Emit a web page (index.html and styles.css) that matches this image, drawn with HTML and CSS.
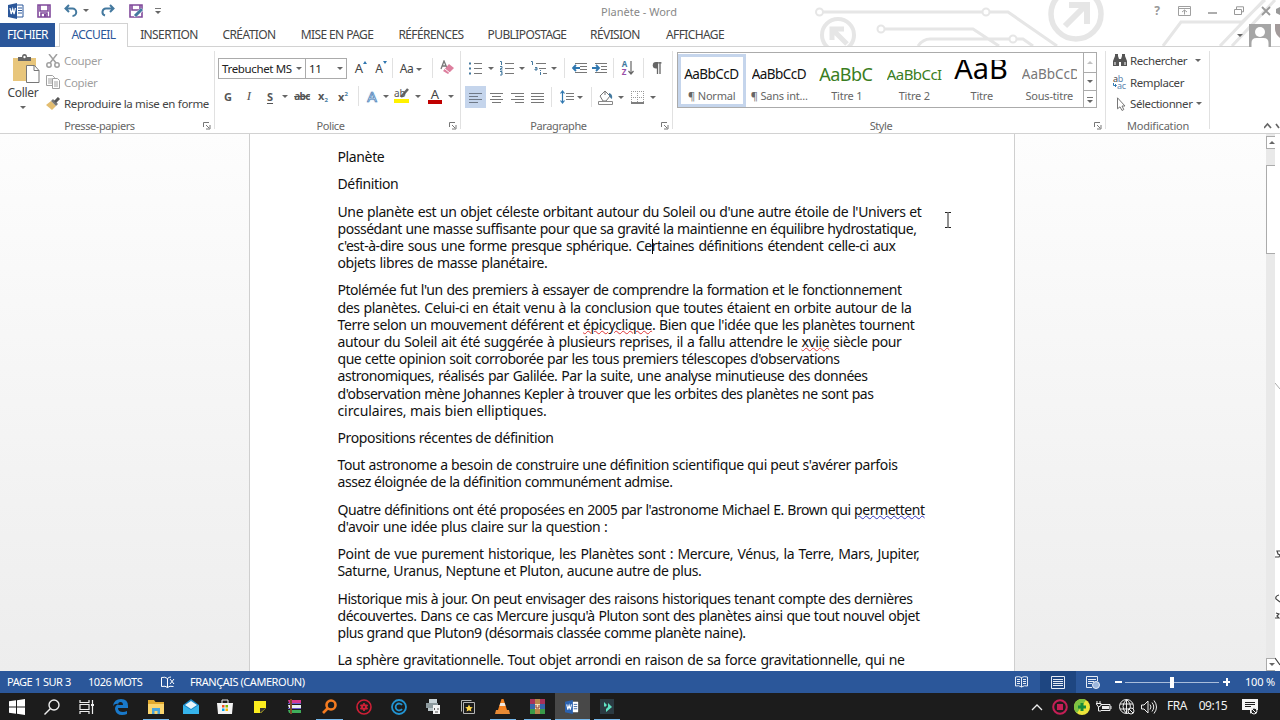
FILE: index.html
```html
<!DOCTYPE html>
<html lang="fr">
<head>
    <meta charset="UTF-8">
    <meta name="viewport" content="width=device-width, initial-scale=1.0">
    <title>Planète - Word</title>
    <link rel="stylesheet" href="styles.css">
</head>
<body>
    <div class="window">
        <header class="header">
            <svg class="circuit" width="500" height="46" viewBox="0 0 500 46" fill="none" stroke="#e6e6e6" stroke-width="3">
                <path d="M43 12H202M210 12H228L277 46M105 29H193L219 46M138 46Q143 39 150 39H229M237 39H243L253 46"/>
                <circle cx="39.500" cy="12" r="3.500" stroke-width="2"/>
                <circle cx="206" cy="12" r="3.500" stroke-width="2"/>
                <circle cx="101" cy="29" r="3.500" stroke-width="2"/>
                <circle cx="233" cy="39" r="3.500" stroke-width="2"/>
                <circle cx="58" cy="35" r="16" stroke-width="4"/>
                <path d="M67 44L53 30M52 40V29H64" stroke-width="5"/>
                <circle cx="296" cy="14" r="25" stroke-width="5.500"/>
                <path d="M285 26L305 6M289 5H307V24" stroke-width="6"/>
                <path d="M383 46L401 22H462L485 0M440 46L484 0M452 46L495 0"/>
            </svg>
            <div class="titlebar">
                <div class="quick">
                    <svg width="16" height="16" viewBox="0 0 16 16"><path d="M8 2h7v12H8z" fill="#fff" stroke="#2b579a"/><path d="M10 5h4M10 7.500h4M10 10h4" stroke="#2b579a"/><path d="M0 2l9-2v16l-9-2z" fill="#2b579a"/><path d="M2 5l1.200 6L4.700 6l1.400 5L7.400 5" fill="none" stroke="#fff" stroke-width="1.200"/></svg>
                    <svg width="14" height="14" viewBox="0 0 14 14"><path d="M1 1h12v12H1zM3 1v6h8V1M4 13v-4h6v4" fill="#fff" stroke="#80499b" stroke-width="1.600"/><path d="M7 10h2v3H7z" fill="#80499b"/></svg>
                    <svg width="14" height="13" viewBox="0 0 14 13" fill="none" stroke="#44799f" stroke-width="2"><path d="M5 1L1.500 4.500L5 8M2 4.500h6.500a3.600 3.600 0 0 1 0 7.500"/></svg>
                    <i class="arr"></i>
                    <svg width="14" height="13" viewBox="0 0 14 13" fill="none" stroke="#44799f" stroke-width="2"><path d="M9 1l3.500 3.500L9 8M12 4.500H5.500A3.600 3.600 0 0 0 4 11.500"/></svg>
                    <svg width="15" height="14" viewBox="0 0 15 14"><path d="M1 1h12v12H1zM3 1v5h8V1" fill="#fff" stroke="#80499b" stroke-width="1.600"/><path d="M5 13l1-4 6-5 3 2-6 6z" fill="#fff"/><path d="M6 12l7-7" stroke="#44799f" stroke-width="3"/></svg>
                    <span class="more"><i class="arr"></i></span>
                </div>
                <div class="title">Planète - Word</div>
                <div class="controls">
                    <b>?</b>
                    <svg width="13" height="10" viewBox="0 0 13 10" fill="none" stroke="#a0a0a0"><path d="M.5.5h12v9H.5zM1 2.500h11M6.500 8.500V4M4 6l2.500-2L9 6"/></svg>
                    <svg width="9" height="10" viewBox="0 0 9 10"><path d="M0 7h9" stroke="#999" stroke-width="1.600"/></svg>
                    <svg width="10" height="10" viewBox="0 0 10 10" fill="none" stroke="#999"><path d="M.5 3.500h7v5h-7zM2.500 3V.8h7v5H8"/></svg>
                    <svg width="10" height="10" viewBox="0 0 10 10"><path d="M1 1l8 8M9 1L1 9" stroke="#999" stroke-width="1.800"/></svg>
                    <svg width="4" height="10" viewBox="0 0 4 10"><path d="M0 3l4-2v8L0 7z" fill="#999"/></svg>
                </div>
            </div>
            <nav class="tabs">
                <span class="tab file">FICHIER</span>
                <span class="tab active">ACCUEIL</span>
                <span class="tab">INSERTION</span>
                <span class="tab">CRÉATION</span>
                <span class="tab">MISE EN PAGE</span>
                <span class="tab">RÉFÉRENCES</span>
                <span class="tab">PUBLIPOSTAGE</span>
                <span class="tab">RÉVISION</span>
                <span class="tab">AFFICHAGE</span>
                <div class="account">
                    <i class="arr"></i>
                    <svg width="31" height="23" viewBox="0 0 31 23"><path d="M0 0h22v23H0z" fill="#a6a6a6"/><circle cx="11" cy="8" r="5" fill="#fff"/><path d="M2.500 23v-4q0-5 5-5h7q5 0 5 5v4z" fill="#fff"/><path d="M26 0h5v14q-5-4-5-9z" fill="#a39b9b"/></svg>
                </div>
            </nav>
        </header>

        <section class="ribbon">
            <div class="group clipboard">
                <div class="group-body clip-body">
                    <div class="paste">
                        <svg width="28" height="30" viewBox="0 0 28 30"><path d="M1 4h23v23H1z" fill="#e8c67c"/><path d="M6 7V3h4Q10 0 12.500 0T15 3h4v4z" fill="#666"/><circle cx="12.500" cy="3" r="1.200" fill="#fff"/><path d="M14.500 11.500h8l4.500 5v12H14.500z" fill="#fff" stroke="#777"/><path d="M22 11.500v5h5" fill="none" stroke="#777"/></svg>
                        <span>Coller</span>
                        <i class="arr"></i>
                    </div>
                    <div class="clip-list">
                        <div class="cmd off"><svg width="15" height="14" viewBox="0 0 15 14" fill="none" stroke="#a0a0a0" stroke-width="1.500"><path d="M3 0l7 9M11 0L4 9"/><circle cx="3" cy="11" r="2.200"/><circle cx="11" cy="11" r="2.200"/></svg><span>Couper</span></div>
                        <div class="cmd off"><svg width="15" height="14" viewBox="0 0 15 14" fill="#fff" stroke="#a0a0a0"><path d="M.5.5h6l2 2v8h-8zM2 4h4M2 6h4M2 8h4"/><path d="M6.500 3.500h5l2 2v8h-7zM8 7h4M8 9h4M8 11h4"/></svg><span>Copier</span></div>
                        <div class="cmd"><svg width="15" height="14" viewBox="0 0 15 14"><path d="M0 8l5-4 5 5-4 4z" fill="#e3bd70"/><path d="M5 4l2-2 5 5-2 2z" fill="#777"/><path d="M9 5l4-4" stroke="#555" stroke-width="3"/></svg><span>Reproduire la mise en forme</span></div>
                    </div>
                </div>
                <div class="caption"><span>Presse-papiers</span><svg class="launch" width="8" height="8" viewBox="0 0 8 8"><path d="M.5 5V.5H6M3 3l3 3M7 3v4H3" fill="none" stroke="#777"/></svg></div>
            </div>

            <div class="group font">
                <div class="group-body">
                    <div class="row font-row1">
                        <div class="combo"><span>Trebuchet MS</span><i class="arr"></i></div>
                        <div class="combo"><span>11</span><i class="arr"></i></div>
                        <span class="grow">A<i class="tri-up"></i></span>
                        <span class="grow small">A<i class="tri-down"></i></span>
                        <i class="sep"></i>
                        <span class="case">Aa <i class="arr"></i></span>
                        <i class="sep"></i>
                        <svg width="14" height="16" viewBox="0 0 14 16"><path d="M1 9L4 1l3 7M2 6h4" fill="none" stroke="#777" stroke-width="1.300"/><path d="M3 11l6-7 5 4-6 6z" fill="#dd7f9e"/><path d="M5 9l5 4" stroke="#fff"/></svg>
                    </div>
                    <div class="row font-row2">
                        <b class="glyph">G</b>
                        <i class="glyph serif">I</i>
                        <b class="glyph under">S</b>
                        <i class="arr"></i>
                        <s class="glyph strike">abc</s>
                        <b class="glyph">x<small class="lower">2</small></b>
                        <b class="glyph">x<small class="upper">2</small></b>
                        <i class="sep"></i>
                        <span class="effect">A</span>
                        <i class="arr"></i>
                        <span class="mark"><svg width="16" height="16" viewBox="0 0 16 16"><path d="M7 9l7-8" stroke="#666" stroke-width="2.500"/><path d="M0 11h15v4H0z" fill="#fff200"/></svg><em>ab</em></span>
                        <i class="arr"></i>
                        <span class="color">A</span>
                        <i class="arr"></i>
                    </div>
                </div>
                <div class="caption"><span>Police</span><svg class="launch" width="8" height="8" viewBox="0 0 8 8"><path d="M.5 5V.5H6M3 3l3 3M7 3v4H3" fill="none" stroke="#777"/></svg></div>
            </div>

            <div class="group para">
                <div class="group-body">
                    <div class="row para-row1">
                        <svg width="13" height="15" viewBox="0 0 13 15"><path d="M5 2.500h8M5 7.500h8M5 12.500h8" stroke="#777"/><path d="M0 1.500h2v2H0zM0 6.500h2v2H0zM0 11.500h2v2H0z" fill="#44799f"/></svg>
                        <i class="arr"></i>
                        <svg width="14" height="15" viewBox="0 0 14 15"><path d="M5 2.500h9M5 7.500h9M5 12.500h9" stroke="#777"/><path d="M0 .5h1.500V4M0 5.500h2v2H.5V9h2M0 10.500h2V14H0M1 12h1" fill="none" stroke="#44799f"/></svg>
                        <i class="arr"></i>
                        <svg width="16" height="15" viewBox="0 0 16 15"><path d="M5 2.500h10M8 7.500h7M12 12.500h4" stroke="#777"/><path d="M0 .5h1.500V4M4 6.500h2V9H4V8h2M9.500 9v1M9.500 11v3" fill="none" stroke="#44799f"/></svg>
                        <i class="arr"></i>
                        <i class="sep"></i>
                        <svg width="15" height="11" viewBox="0 0 15 11"><path d="M3 .5h12M8 3.500h7M8 6.500h7M3 9.500h12" stroke="#777"/><path d="M8 5H1M4 2L1 5l3 3" fill="none" stroke="#2f77b0" stroke-width="1.800"/></svg>
                        <svg width="15" height="11" viewBox="0 0 15 11"><path d="M3 .5h12M9 3.500h6M9 6.500h6M3 9.500h12" stroke="#777"/><path d="M0 5h7M4 2l3 3-3 3" fill="none" stroke="#2f77b0" stroke-width="1.800"/></svg>
                        <i class="sep"></i>
                        <span class="sort"><span><em>A</em><em>Z</em></span><svg width="6" height="14" viewBox="0 0 6 14"><path d="M3 0v13M.5 10L3 13l2.500-3" fill="none" stroke="#666" stroke-width="1.200"/></svg></span>
                        <i class="sep"></i>
                        <svg width="10" height="12" viewBox="0 0 10 12"><path d="M9.500.8H4.500M5.500 0v12M8 0v12" stroke="#666" stroke-width="1.300"/><path d="M5.500 0H4a3.200 3.200 0 0 0 0 6.500h1.500z" fill="#666"/></svg>
                    </div>
                    <div class="row para-row2">
                        <span class="pressed"><svg width="13" height="11" viewBox="0 0 13 11"><path d="M0 1.500h13M0 4.500h9M0 7.500h13M0 10.500h9" stroke="#6f7987"/></svg></span>
                        <svg width="13" height="11" viewBox="0 0 13 11"><path d="M0 1.500h13M2 4.500h9M0 7.500h13M2 10.500h9" stroke="#777"/></svg>
                        <svg width="13" height="11" viewBox="0 0 13 11"><path d="M0 1.500h13M4 4.500h9M0 7.500h13M4 10.500h9" stroke="#777"/></svg>
                        <svg width="13" height="11" viewBox="0 0 13 11"><path d="M0 1.500h13M0 4.500h13M0 7.500h13M0 10.500h13" stroke="#777"/></svg>
                        <i class="sep"></i>
                        <svg width="14" height="14" viewBox="0 0 14 14"><path d="M6 3.500h8M6 6.500h8M6 9.500h8" stroke="#777"/><path d="M2.500 1v12M.5 3.500l2-2.500 2 2.500M.5 10.500l2 2.500 2-2.500" fill="none" stroke="#2f77b0" stroke-width="1.200"/></svg>
                        <i class="arr"></i>
                        <i class="sep"></i>
                        <svg width="16" height="15" viewBox="0 0 16 15"><path d="M2 6l5-5 5 5-4 5H5zM7 1v4" fill="#fff" stroke="#777"/><path d="M11 3q4 1 3 6-2-1-3-4z" fill="#44799f"/><path d="M.5 11.500h14v3H.5z" fill="#fff" stroke="#888"/></svg>
                        <i class="arr"></i>
                        <svg width="13" height="13" viewBox="0 0 13 13" fill="none" stroke="#999"><path d="M.5 0v12M6.500 0v12M12.500 0v12M0 .5h13M0 6.500h13" stroke-dasharray="1 1"/><path d="M0 12h13" stroke="#555" stroke-width="1.500"/></svg>
                        <i class="arr"></i>
                    </div>
                </div>
                <div class="caption"><span>Paragraphe</span><svg class="launch" width="8" height="8" viewBox="0 0 8 8"><path d="M.5 5V.5H6M3 3l3 3M7 3v4H3" fill="none" stroke="#777"/></svg></div>
            </div>

            <div class="group styles">
                <div class="group-body">
                    <div class="gallery">
                        <div class="style selected"><div class="sample">AaBbCcD</div><span>¶ Normal</span></div>
                        <div class="style"><div class="sample">AaBbCcD</div><span>¶ Sans int...</span></div>
                        <div class="style"><div class="sample h1">AaBbC</div><span>Titre 1</span></div>
                        <div class="style"><div class="sample h2">AaBbCcI</div><span>Titre 2</span></div>
                        <div class="style"><div class="sample big">AaB</div><span>Titre</span></div>
                        <div class="style"><div class="sample sub">AaBbCcD</div><span>Sous-titre</span></div>
                        <div class="pager">
                            <span><i class="arr up"></i></span>
                            <span><i class="arr"></i></span>
                            <span class="more"><i class="arr"></i></span>
                        </div>
                    </div>
                </div>
                <div class="caption"><span>Style</span><svg class="launch" width="8" height="8" viewBox="0 0 8 8"><path d="M.5 5V.5H6M3 3l3 3M7 3v4H3" fill="none" stroke="#777"/></svg></div>
            </div>

            <div class="group edit">
                <div class="group-body edit-list">
                    <div class="cmd"><svg width="14" height="13" viewBox="0 0 14 13"><path d="M0 12V7l2-5h3l1 3h2l1-3h3l2 5v5H8V8H6v4z" fill="#555"/><path d="M2 0h3v2H2zM9 0h3v2H9z" fill="#555"/><path d="M2 8v3M12 8v3" stroke="#fff"/></svg><span>Rechercher</span><i class="arr"></i></div>
                    <div class="cmd"><span class="swap"><em>a<u>b</u></em><em class="to"><svg width="4" height="5" viewBox="0 0 4 5"><path d="M.5 0v2.500H3M2 1l1.500 1.500L2 4" fill="none" stroke="#2f77b0"/></svg><u>ac</u></em></span><span>Remplacer</span></div>
                    <div class="cmd"><svg width="14" height="14" viewBox="0 0 14 14"><path d="M4.500.8v11l2.500-2 2 3.700 1.800-1L9 9h3z" fill="#fff" stroke="#777"/></svg><span>Sélectionner</span><i class="arr"></i></div>
                </div>
                <div class="caption"><span>Modification</span></div>
            </div>
            <div class="collapse"><svg width="16" height="8" viewBox="0 0 16 8"><path d="M0 6l3.500-4L7 6M12 2l3 4" fill="none" stroke="#666" stroke-width="1.700"/></svg></div>
        </section>

        <main class="workspace">
            <article class="page">
                <p><span style="width:48px">Planète</span></p>
                <p><span style="width:61px">Définition</span></p>
                <p>
                    <span style="width:584px">Une planète est un objet céleste orbitant autour du Soleil ou d'une autre étoile de l'Univers et</span>
                    <span class="tight" style="width:579px">possédant une masse suffisante pour que sa gravité la maintienne en équilibre hydrostatique,</span>
                    <span class="tight" style="width:558px">c'est-à-dire sous une forme presque sphérique. Ce<i class="caret"></i>rtaines définitions étendent celle-ci aux</span>
                    <span style="width:210px">objets libres de masse planétaire.</span>
                </p>
                <p>
                    <span class="tight" style="width:564px">Ptolémée fut l'un des premiers à essayer de comprendre la formation et le fonctionnement</span>
                    <span style="width:574px">des planètes. Celui-ci en était venu à la conclusion que toutes étaient en orbite autour de la</span>
                    <span style="width:577px">Terre selon un mouvement déférent et <u class="spell">épicyclique</u>. Bien que l'idée que les planètes tournent</span>
                    <span style="width:564px">autour du Soleil ait été suggérée à plusieurs reprises, il a fallu attendre le <u class="spell">xviie</u> siècle pour</span>
                    <span class="tight" style="width:502px">que cette opinion soit corroborée par les tous premiers télescopes d'observations</span>
                    <span class="tight" style="width:530px">astronomiques, réalisés par Galilée. Par la suite, une analyse minutieuse des données</span>
                    <span class="tight" style="width:536px">d'observation mène Johannes Kepler à trouver que les orbites des planètes ne sont pas</span>
                    <span class="loose" style="width:206px">circulaires, mais bien elliptiques.</span>
                </p>
                <p><span style="width:216px">Propositions récentes de définition</span></p>
                <p>
                    <span style="width:560px">Tout astronome a besoin de construire une définition scientifique qui peut s'avérer parfois</span>
                    <span class="tight" style="width:335px">assez éloignée de la définition communément admise.</span>
                </p>
                <p>
                    <span class="tight" style="width:587px">Quatre définitions ont été proposées en 2005 par l'astronome Michael E. Brown qui <u class="grammar">permettent</u></span>
                    <span style="width:270px">d'avoir une idée plus claire sur la question :</span>
                </p>
                <p>
                    <span style="width:582px">Point de vue purement historique, les Planètes sont : Mercure, Vénus, la Terre, Mars, Jupiter,</span>
                    <span style="width:364px">Saturne, Uranus, Neptune et Pluton, aucune autre de plus.</span>
                </p>
                <p>
                    <span class="tight" style="width:575px">Historique mis à jour. On peut envisager des raisons historiques tenant compte des dernières</span>
                    <span class="tight" style="width:582px">découvertes. Dans ce cas Mercure jusqu'à Pluton sont des planètes ainsi que tout nouvel objet</span>
                    <span class="tight" style="width:408px">plus grand que Pluton9 (désormais classée comme planète naine).</span>
                </p>
                <p><span style="width:567px">La sphère gravitationnelle. Tout objet arrondi en raison de sa force gravitationnelle, qui ne</span></p>
            </article>
            <svg class="pointer" width="8" height="16" viewBox="0 0 8 16"><path d="M1 .5h2.500l.5.500.5-.5H7M4 1v14M1 15.500h2.500L4 15l.5.500H7" fill="none" stroke="#222"/></svg>
            <div class="scroll">
                <span class="scroll-btn"><i class="arr up"></i></span>
                <span class="thumb"></span>
                <span class="scroll-btn"><i class="arr"></i></span>
            </div>
            <svg class="edge" width="5" height="537" viewBox="0 0 5 537" fill="none" stroke="#444"><path d="M0 249l5 6" stroke="#aaa"/><path d="M5 417H2l1 3 2 1-1 2H0M4 461q-4 1-3 4l4 3M1 479l3 1-2 2 2 2H0M0 524l5 7" stroke-width="1.200"/></svg>
        </main>

        <footer class="status">
            <span class="pages">PAGE 1 SUR 3</span>
            <span class="words">1026 MOTS</span>
            <svg class="proof" width="15" height="13" viewBox="0 0 15 13" fill="none" stroke="#fff"><path d="M6.500 11.500V2.500Q4 .5.500 1.500v9q4-1 6 1 2-2 6-1M6.500 2.500Q8 1 10 1M9 3l4 5M13 3L9 8"/></svg>
            <span class="lang">FRANÇAIS (CAMEROUN)</span>
            <div class="views">
                <svg width="13" height="12" viewBox="0 0 13 12" fill="none" stroke="#e4ebf5"><path d="M6.500 11V1.500Q4 0 .5 1v9q3-1 6 1 3-2 6-1V1Q9 0 6.500 1.500M2 3.500h3M2 5.500h3M2 7.500h3M8 3.500h3M8 5.500h3M8 7.500h3"/></svg>
                <span class="current"><svg width="14" height="13" viewBox="0 0 14 13" fill="none" stroke="#e4ebf5"><path d="M.5.5h13v12H.5zM2 3.500h10M2 5.500h10M2 7.500h10M2 9.500h10"/></svg></span>
                <svg width="14" height="13" viewBox="0 0 14 13" fill="none" stroke="#e4ebf5"><path d="M6 11.500H.5V.5h11V5M2 3.500h8M2 5.500h6M2 7.500h4"/><circle cx="10" cy="9" r="3.500" fill="#9ab5dc"/></svg>
            </div>
            <div class="zoom">
                <i class="minus"></i>
                <span class="track"><i></i></span>
                <i class="plus"></i>
                <span class="percent">100 %</span>
            </div>
        </footer>

        <footer class="taskbar">
            <div class="apps">
                <span class="app"><svg width="16" height="16" viewBox="0 0 16 16" fill="#fff"><path d="M0 2.300l7-1v6.200H0zM8 1.200L16 0v7.500H8zM0 8.500h7v6.200l-7-1zM8 8.500h8V16l-8-1.200z"/></svg></span>
                <span class="app"><svg width="16" height="16" viewBox="0 0 16 16" fill="none" stroke="#eee" stroke-width="1.400"><circle cx="10" cy="6" r="5"/><path d="M6.500 9.500L.5 15.500"/></svg></span>
                <span class="app"><svg width="16" height="14" viewBox="0 0 16 14" fill="none" stroke="#eee" stroke-width="1.200"><path d="M1 0v2.500h9V0M1 4.500h9v5H1zM1 14v-2.500h9V14M13.500 0v14"/><path d="M12 4h3v2h-3z" fill="#eee" stroke="none"/></svg></span>
                <span class="app"><svg width="16" height="16" viewBox="0 0 16 16"><path d="M0 7Q1 0 8 0q7 0 7 7v2H5q0 4 5 4 2 0 4-1v3q-2 1-5 1-6 0-7-6 0-4 4-5Q2 4 0 7zm5-1h5q0-3-2.500-3T5 6z" fill="#1979ca" fill-rule="evenodd"/></svg></span>
                <span class="app open"><svg width="16" height="14" viewBox="0 0 16 14"><path d="M0 0h6l1.500 2H16v12H0z" fill="#e0a92f"/><path d="M0 4h16v10H0z" fill="#fbd56e"/><path d="M4 14V8h8v6h-2.500v-3h-3v3z" fill="#4aa5dc"/></svg></span>
                <span class="app"><svg width="16" height="15" viewBox="0 0 16 15"><path d="M0 6l8-6 8 6v9H0z" fill="#1685c8"/><path d="M2 6l6-4 6 4-6 4z" fill="#e8f5fc"/><path d="M0 6l8 5 8-5v9H0z" fill="#36b4ec"/></svg></span>
                <span class="app"><svg width="16" height="15" viewBox="0 0 16 15"><path d="M5 4V1h6v3" fill="none" stroke="#eee"/><path d="M0 4h16l-1 11H1z" fill="#f3f3f3"/><path d="M5 6h2.500v2.500H5z" fill="#f25022"/><path d="M8.500 6H11v2.500H8.500z" fill="#7fba00"/><path d="M5 9.500h2.500V12H5z" fill="#00a4ef"/><path d="M8.500 9.500H11V12H8.500z" fill="#ffb900"/></svg></span>
                <span class="app"><svg width="12" height="12" viewBox="0 0 12 12"><path d="M0 0h12v7l-5 5H0z" fill="#fbec1e"/><path d="M6 12V7h6z" fill="#333"/></svg></span>
                <span class="app"><svg width="15" height="15" viewBox="0 0 15 15"><path d="M1 1h13v3H2z" fill="#d83a8f"/><path d="M1 6h13v3H2z" fill="#e8f2ef"/><path d="M1 11h13v3H2z" fill="#3fae5a"/><path d="M1 4.500h13M1 9.500h13" stroke="#6a5acd"/><path d="M4 0v15" stroke="#7c4a2a" stroke-width="2"/></svg></span>
                <span class="app open"><svg width="15" height="15" viewBox="0 0 15 15" fill="none" stroke="#f47b20" stroke-width="2.600"><circle cx="9" cy="6" r="4.500"/><path d="M6 9l-5 5"/></svg></span>
                <span class="app"><svg width="16" height="16" viewBox="0 0 16 16" fill="none" stroke="#cf2036" stroke-width="1.600"><circle cx="8" cy="8" r="7"/><path d="M8 4l1 2h2.500L10.500 8l1 2H9l-1 2-1-2H4.500l1-2-1-2H7z" fill="#cf2036" stroke-width="1"/><circle cx="8" cy="8" r="1" fill="#1c1c1c" stroke="none"/></svg></span>
                <span class="app"><svg width="16" height="16" viewBox="0 0 16 16" fill="none" stroke="#2294d2" stroke-width="1.800"><circle cx="8" cy="8" r="7"/><path d="M11 6a3.500 3.500 0 1 0 0 4"/></svg></span>
                <span class="app"><svg width="15" height="15" viewBox="0 0 15 15"><path d="M3 0h8v4H3z" fill="#c9d4d8"/><path d="M0 4h12v5H0z" fill="#8d9a9e"/><path d="M2 9h5v3H2z" fill="#bac5c8"/><path d="M7 6h7v9H7z" fill="#f4f4f4"/><path d="M8.500 9v2M12 9v2M9 13h3" stroke="#555"/></svg></span>
                <span class="app"><svg width="14" height="14" viewBox="0 0 14 14"><path d="M.5 11.500V.5h10M2.500 2.500h11v11h-11z" fill="none" stroke="#b5b5b5"/><path d="M8 4.500l1.200 2.400 2.600.3-2 1.800.6 2.500L8 10.300l-2.400 1.200.6-2.500-2-1.800 2.600-.3z" fill="#ffd54a"/></svg></span>
                <span class="app open"><svg width="15" height="15" viewBox="0 0 15 15"><path d="M6.500 0h2L12 11H3z" fill="#f58220"/><path d="M5.300 4h4.400l.8 3h-6z" fill="#f2e8df"/><path d="M1 11h13l1 4H0z" fill="#e78a35"/></svg></span>
                <span class="app open"><svg width="15" height="15" viewBox="0 0 15 15"><path d="M0 0h15v5H0z" fill="#a8325a"/><path d="M0 5h15v5H0z" fill="#3764aa"/><path d="M0 10h15v5H0z" fill="#3a9a48"/><path d="M5 0h5v15H5z" fill="#b9864b"/><path d="M5 5h5v5H5z" fill="#f1dfb6"/><path d="M6 6v3h3V6" fill="none" stroke="#833"/></svg></span>
                <span class="app open here"><svg width="14" height="14" viewBox="0 0 16 16"><path d="M8 2h7v12H8z" fill="#fff"/><path d="M10 5h4M10 7.500h4M10 10h4" stroke="#2b579a"/><path d="M0 2l9-2v16l-9-2z" fill="#2b62b0"/><path d="M2 5l1.200 6L4.700 6l1.400 5L7.400 5" fill="none" stroke="#fff" stroke-width="1.200"/></svg></span>
                <span class="app open"><svg width="14" height="15" viewBox="0 0 14 15"><path d="M0 0h14v15H0z" fill="#2b3a42"/><path d="M4 3l3 3-2 2-1-1zM8 4l4 4-6 5V10l2-2z" fill="#5fe3c3"/></svg></span>
            </div>
            <div class="tray">
                <svg width="12" height="8" viewBox="0 0 12 8" fill="none" stroke="#eee" stroke-width="1.300"><path d="M1 7l5-5 5 5"/></svg>
                <svg width="16" height="16" viewBox="0 0 16 16"><circle cx="8" cy="8" r="6.800" fill="none" stroke="#c51f56" stroke-width="2"/><path d="M5 5h6v6H5z" fill="#c51f56"/></svg>
                <svg width="16" height="16" viewBox="0 0 16 16"><circle cx="8" cy="8" r="8" fill="#ede43b"/><path d="M0 8a8 8 0 0 1 12-7L3 14q-3-2-3-6z" fill="#7dc242"/><path d="M8 4v8M4 8h8" stroke="#168a3b" stroke-width="3"/></svg>
                <svg width="16" height="12" viewBox="0 0 16 12" fill="none" stroke="#eee"><path d="M5 3.500h9v6H5M15 5v3M1 0v2M4 0v2M0 2.500h5v2L2.500 6zM2.500 6v4H5"/><path d="M6 5h7v3H6z" fill="#eee" stroke="none"/></svg>
                <svg width="16" height="16" viewBox="0 0 16 16" fill="none" stroke="#eee"><circle cx="7.500" cy="7.500" r="7"/><path d="M7.500.5v14M1 5h13M1 10h13M7.500.5q-7 7 0 14M7.500.5q5 4 3.500 9"/><circle cx="12" cy="12" r="3" fill="#1c1c1c"/><path d="M10 10l4 4"/></svg>
                <svg width="16" height="14" viewBox="0 0 16 14" fill="none" stroke="#eee"><path d="M.5 5v4H3l4 4V1L3 5zM9 4.500q2 2.500 0 5M11 2.500q3.500 4.500 0 9M13 .5q5 6.500 0 13"/></svg>
                <span class="lang-code">FRA</span>
                <span class="clock">09:15</span>
                <svg width="16" height="16" viewBox="0 0 16 16"><path d="M0 0h16v11h-5l-3 4v-4H0z" fill="#f4f4f4"/><path d="M3 3.500h10M3 5.500h10M3 7.500h6" stroke="#1c1c1c"/><circle cx="12" cy="12" r="3" fill="#1c1c1c" stroke="#eee"/><path d="M10 10l4 4" stroke="#eee"/></svg>
            </div>
        </footer>
    </div>
</body>
</html>
```
FILE: styles.css
```css
* {
    box-sizing: border-box;
}
body {
    margin: 0;
    font-family: "Noto Sans", "Open Sans", sans-serif;
    font-size: 12px;
    color: #444;
    background: #fff;
}
svg {
    display: block;
    flex: none;
}
.window {
    width: 1280px;
    height: 720px;
    overflow: hidden;
    display: flex;
    flex-direction: column;
}

/* small drop-down arrows */
.arr {
    display: inline-block;
    flex: none;
    width: 0;
    height: 0;
    border: 3px solid transparent;
    border-top: 3px solid #666;
    border-bottom: 0;
}
.arr.up {
    border-top: 0;
    border-bottom: 3px solid #666;
}
.more {
    display: flex;
    flex-direction: column;
    align-items: center;
    justify-content: center;
    gap: 2px;
}
.more::before {
    content: "";
    width: 6px;
    height: 1px;
    background: #777;
}

/* title bar and tabs */
.header {
    position: relative;
    height: 47px;
    border-bottom: 1px solid #d2d2d2;
}
.circuit {
    position: absolute;
    left: 780px;
    top: 0;
}
.titlebar {
    position: relative;
    height: 23px;
    display: grid;
    grid-template-columns: 540px 198px 1fr;
}
.quick {
    display: grid;
    grid-template-columns: 32px 24px 30px 0 44px 12px 32px;
    align-items: center;
    justify-items: center;
    height: 21px;
}
.title {
    text-align: center;
    line-height: 24px;
    font-size: 11px;
    color: #888;
}
.controls {
    display: grid;
    grid-template-columns: 18px 36px 20px 34px 20px 4px;
    justify-content: end;
    justify-items: center;
    align-items: center;
    height: 21px;
    color: #999;
}
.tabs {
    position: relative;
    display: grid;
    grid-template-columns: 55px 73px 82px 78px 98px 90px 102px 74px 86px 1fr;
    height: 24px;
}
.tab {
    text-align: center;
    line-height: 24px;
    letter-spacing: -0.6px;
    white-space: nowrap;
}
.file {
    background: #2b579a;
    color: #fff;
}
.active {
    margin-left: 4px;
    height: 24px;
    color: #2b579a;
    background: #fff;
    border: 1px solid #d2d2d2;
    border-bottom: 0;
    line-height: 22px;
}
.account {
    display: flex;
    justify-content: flex-end;
    align-items: center;
    gap: 6px;
}

/* ribbon */
.ribbon {
    height: 87px;
    display: flex;
    border-bottom: 1px solid #d2d2d2;
}
.group {
    display: flex;
    flex-direction: column;
    position: relative;
}
.group::after {
    content: "";
    position: absolute;
    right: 0;
    top: 4px;
    bottom: 4px;
    width: 1px;
    background: #e1e1e1;
}
.clipboard { width: 215px; }
.font { width: 246px; padding-left: 3px; }
.para { width: 212px; padding-left: 4px; }
.styles { width: 433px; padding-left: 4px; }
.edit { width: 104px; }
.group-body {
    height: 71px;
    flex: none;
}
.caption {
    display: flex;
    justify-content: center;
    align-items: center;
    height: 15px;
    font-size: 11px;
    line-height: 15px;
    color: #666;
    padding-right: 16px;
    position: relative;
    letter-spacing: -0.4px;
}
.font .caption {
    padding-right: 18px;
}
.para .caption,
.styles .caption {
    padding-right: 21px;
}
.edit .caption {
    padding-right: 0;
    letter-spacing: -0.2px;
}
.launch {
    position: absolute;
    right: 4px;
    top: 4px;
}
.clip-body {
    display: flex;
}
.paste {
    width: 46px;
    display: flex;
    flex-direction: column;
    align-items: center;
    padding-top: 7px;
    letter-spacing: -0.3px;
}
.paste svg {
    margin-left: 6px;
}
.paste span {
    line-height: 18px;
}
.paste .arr {
    margin-top: 4px;
}
.clip-list {
    padding-top: 3px;
    width: 164px;
}
.cmd {
    display: flex;
    align-items: center;
    gap: 3px;
    height: 21.500px;
    font-size: 11.500px;
    white-space: nowrap;
    letter-spacing: -0.33px;
}
.off {
    color: #a0a0a0;
}
.row {
    display: grid;
    align-items: center;
    justify-items: center;
    justify-content: start;
}
.row > * {
    flex: none;
}
.font-row1 {
    grid-template-columns: 88px 41px 24px 16px 10px 28px 14px 16px;
    height: 22px;
    margin-top: 10px;
}
.font-row2 {
    grid-template-columns: 20px 22px 20px 10px 24px 18px 22px 8px 20px 8px 24px 8px 26px 5px;
    height: 22px;
    margin-top: 6px;
}
.para-row1 {
    grid-template-columns: 20px 12px 20px 10px 24px 6px 14px 16px 24px 4px 26px 4px 24px;
    height: 22px;
    margin-top: 10px;
}
.para-row2 {
    grid-template-columns: 21px 20px 22px 18px 10px 22px 4px 18px 12px 18px 14px 18px;
    height: 22px;
    margin-top: 7px;
}
.sep {
    width: 1px;
    height: 20px;
    background: #e1e1e1;
}
.combo {
    width: 100%;
    height: 21px;
    border: 1px solid #ababab;
    display: flex;
    align-items: center;
    justify-content: space-between;
    padding: 0 3px 0 3px;
    color: #222;
    font-size: 11.500px;
    letter-spacing: -0.35px;
    white-space: nowrap;
}
.combo + .combo {
    border-left: 0;
}
.grow {
    position: relative;
    font-size: 13px;
}
.grow.small {
    font-size: 12px;
}
.tri-up, .tri-down {
    position: absolute;
    right: -4px;
    top: 2px;
    border: 2.5px solid transparent;
    border-bottom: 3px solid #2f77b0;
    border-top: 0;
}
.tri-down {
    border-top: 3px solid #2f77b0;
    border-bottom: 0;
    top: 1px;
}
.case {
    white-space: nowrap;
    font-size: 12px;
    letter-spacing: -0.3px;
}
.case .arr {
    vertical-align: 2px;
}
.glyph {
    font-size: 11px;
    color: #555;
    white-space: nowrap;
}
.serif {
    font-family: "Liberation Serif", serif;
    font-size: 13px;
}
.under {
    text-decoration: underline;
    text-underline-offset: 2px;
}
.strike {
    font-size: 10px;
    font-weight: bold;
    letter-spacing: -0.6px;
}
.glyph small {
    font-size: 6px;
    color: #44799f;
}
.lower { vertical-align: -2px; }
.upper { vertical-align: 5px; }
.effect {
    font-size: 15px;
    line-height: 20px;
    color: #fff;
    -webkit-text-stroke: 0.7px #3f79b5;
    text-shadow: 0 0 2px #9ec3e8;
}
.mark {
    position: relative;
    width: 16px;
    height: 16px;
}
.mark em {
    position: absolute;
    left: 0;
    top: -2px;
    font-style: normal;
    font-size: 10px;
    line-height: 14px;
    color: #555;
}
.color {
    width: 14px;
    height: 16px;
    border-bottom: 4px solid #c00000;
    text-align: center;
    font-size: 13px;
    line-height: 12px;
}
.sort {
    display: flex;
    align-items: center;
    gap: 1px;
}
.sort em {
    display: block;
    font-style: normal;
    font-size: 8px;
    font-weight: bold;
    line-height: 8px;
    color: #44799f;
}
.sort em + em {
    color: #9a4fa8;
}
.pressed {
    width: 21px;
    height: 22px;
    background: #c5d5ec;
    display: flex;
    align-items: center;
    justify-content: center;
}
.gallery {
    display: grid;
    grid-template-columns: repeat(6, 67.500px) 1fr;
    width: 420px;
    height: 56px;
    margin-top: 5px;
    border: 1px solid #ababab;
}
.style {
    display: flex;
    flex-direction: column;
    align-items: center;
    font-size: 11px;
    line-height: 16px;
    color: #666;
    padding-top: 7px;
    letter-spacing: -0.2px;
}
.selected {
    border: 3px solid #c5d5ec;
    margin: 1px 0;
    padding-top: 3px;
}
.sample {
    width: 55px;
    height: 28px;
    line-height: 28px;
    overflow: hidden;
    white-space: nowrap;
    color: #111;
    font-size: 13.500px;
    letter-spacing: -0.55px;
}
.h1 {
    font-size: 18px;
    color: #3a7d22;
}
.h2 {
    font-size: 15px;
    color: #3a7d22;
}
.big {
    font-size: 29px;
    line-height: 16px;
    letter-spacing: 0;
    color: #000;
}
.sub {
    color: #777;
    letter-spacing: 0;
}
.pager {
    display: grid;
    grid-template-rows: 19px 18px 1fr;
    border-left: 1px solid #ababab;
}
.pager span {
    display: flex;
    align-items: center;
    justify-content: center;
}
.pager span + span {
    border-top: 1px solid #ababab;
}
.pager .up {
    opacity: 0.4;
}
.edit-list {
    padding: 3px 0 0 7px;
}
.edit-list .cmd {
    gap: 3px;
    letter-spacing: -0.4px;
}
.edit-list .cmd:first-child .arr {
    margin-left: 5px;
}
.swap {
    width: 14px;
    font-size: 9px;
    line-height: 7px;
}
.swap em {
    display: block;
    font-style: normal;
}
.swap .to {
    display: flex;
    align-items: center;
}
.swap u {
    text-decoration: none;
    color: #5d87b0;
}
.collapse {
    flex: 1;
    display: flex;
    align-items: flex-end;
    justify-content: flex-end;
    padding-bottom: 3px;
}

/* document */
.workspace {
    position: relative;
    height: 537px;
    display: flex;
    background: linear-gradient(#fdfdfd, #ededed);
}
.page {
    width: 766px;
    height: 537px;
    margin-left: 249px;
    border: 1px solid #cfcfcf;
    border-top: 0;
    border-bottom: 0;
    background: #fff;
    overflow: hidden;
    padding: 14px 0 0 87.500px;
    font-size: 14px;
    line-height: 17.200px;
    color: #111;
    letter-spacing: -0.37px;
}
.page p {
    margin: 0 0 10.050px;
}
.page span {
    display: block;
    white-space: nowrap;
    text-align-last: justify;
}
.page .tight {
    letter-spacing: -0.46px;
}
.page .loose {
    letter-spacing: -0.1px;
}
.spell {
    text-decoration: underline wavy #d33 1px;
    text-underline-offset: 0;
}
.grammar {
    text-decoration: underline wavy #33b 1px;
    text-underline-offset: 0;
}
.caret {
    display: inline-block;
    width: 1px;
    height: 15px;
    margin-right: -1px;
    background: #000;
    vertical-align: -3px;
}
.pointer {
    position: absolute;
    left: 944px;
    top: 78px;
}
.scroll {
    width: 9px;
    margin-left: auto;
    background: #e9e9e9;
    display: flex;
    flex-direction: column;
    padding-top: 2px;
}
.scroll-btn {
    height: 13px;
    background: #fff;
    border: 1px solid #ababab;
    border-right: 0;
    display: flex;
    align-items: center;
    justify-content: flex-end;
}
.thumb {
    height: 89px;
    margin: 16px 0 auto;
    background: #fff;
    border: 1px solid #ababab;
    border-right: 0;
}
.edge {
    background: #fff;
}

/* status bar */
.status {
    height: 22px;
    background: #2b579a;
    color: #fff;
    display: flex;
    align-items: center;
    font-size: 11px;
    white-space: nowrap;
    letter-spacing: -0.45px;
}
.pages, .words, .lang, .percent {
    padding-bottom: 2px;
}
.pages { width: 81px; margin-left: 7px; }
.words { width: 73px; }
.proof { margin-right: 14px; }
.views {
    display: grid;
    grid-template-columns: 38px 36px 34px;
    height: 22px;
    margin-left: auto;
    align-items: center;
    justify-items: center;
}
.current {
    width: 36px;
    height: 22px;
    background: #1e4681;
    display: flex;
    align-items: center;
    justify-content: center;
}
.zoom {
    display: flex;
    align-items: center;
    width: 170px;
    padding-left: 5px;
}
.minus, .plus {
    width: 7px;
    height: 2px;
    background: #fff;
}
.track {
    width: 94px;
    height: 1px;
    margin: 0 4px 0 3px;
    background: #a9bddb;
    display: flex;
    align-items: center;
    justify-content: center;
}
.track i {
    width: 4px;
    height: 11px;
    background: #fff;
    flex: none;
}
.plus::before {
    content: "";
    display: block;
    width: 2px;
    height: 8px;
    margin: -3px 0 0 2.500px;
    background: #fff;
}
.percent {
    margin-left: 15px;
    letter-spacing: -0.2px;
}

/* taskbar */
.taskbar {
    flex: 1;
    background: #1c1c1c;
    display: flex;
    justify-content: space-between;
}
.apps {
    display: grid;
    grid-template-columns: repeat(18, 34.700px);
}
.app {
    height: 27px;
    display: flex;
    align-items: center;
    justify-content: center;
    position: relative;
}
.open::after {
    content: "";
    position: absolute;
    left: 4px;
    right: 4px;
    bottom: -1px;
    height: 2px;
    background: #76b9ed;
}
.here {
    background: #484848;
}
.here::after {
    left: 0;
    right: 0;
}
.tray {
    display: grid;
    grid-template-columns: 22px 24px 20px 24px 22px 22px 34px 38px 36px;
    margin-right: 12px;
    align-items: center;
    justify-items: center;
    color: #f2f2f2;
    height: 27px;
}
.lang-code, .clock {
    padding-bottom: 2px;
    letter-spacing: -0.4px;
}
```
